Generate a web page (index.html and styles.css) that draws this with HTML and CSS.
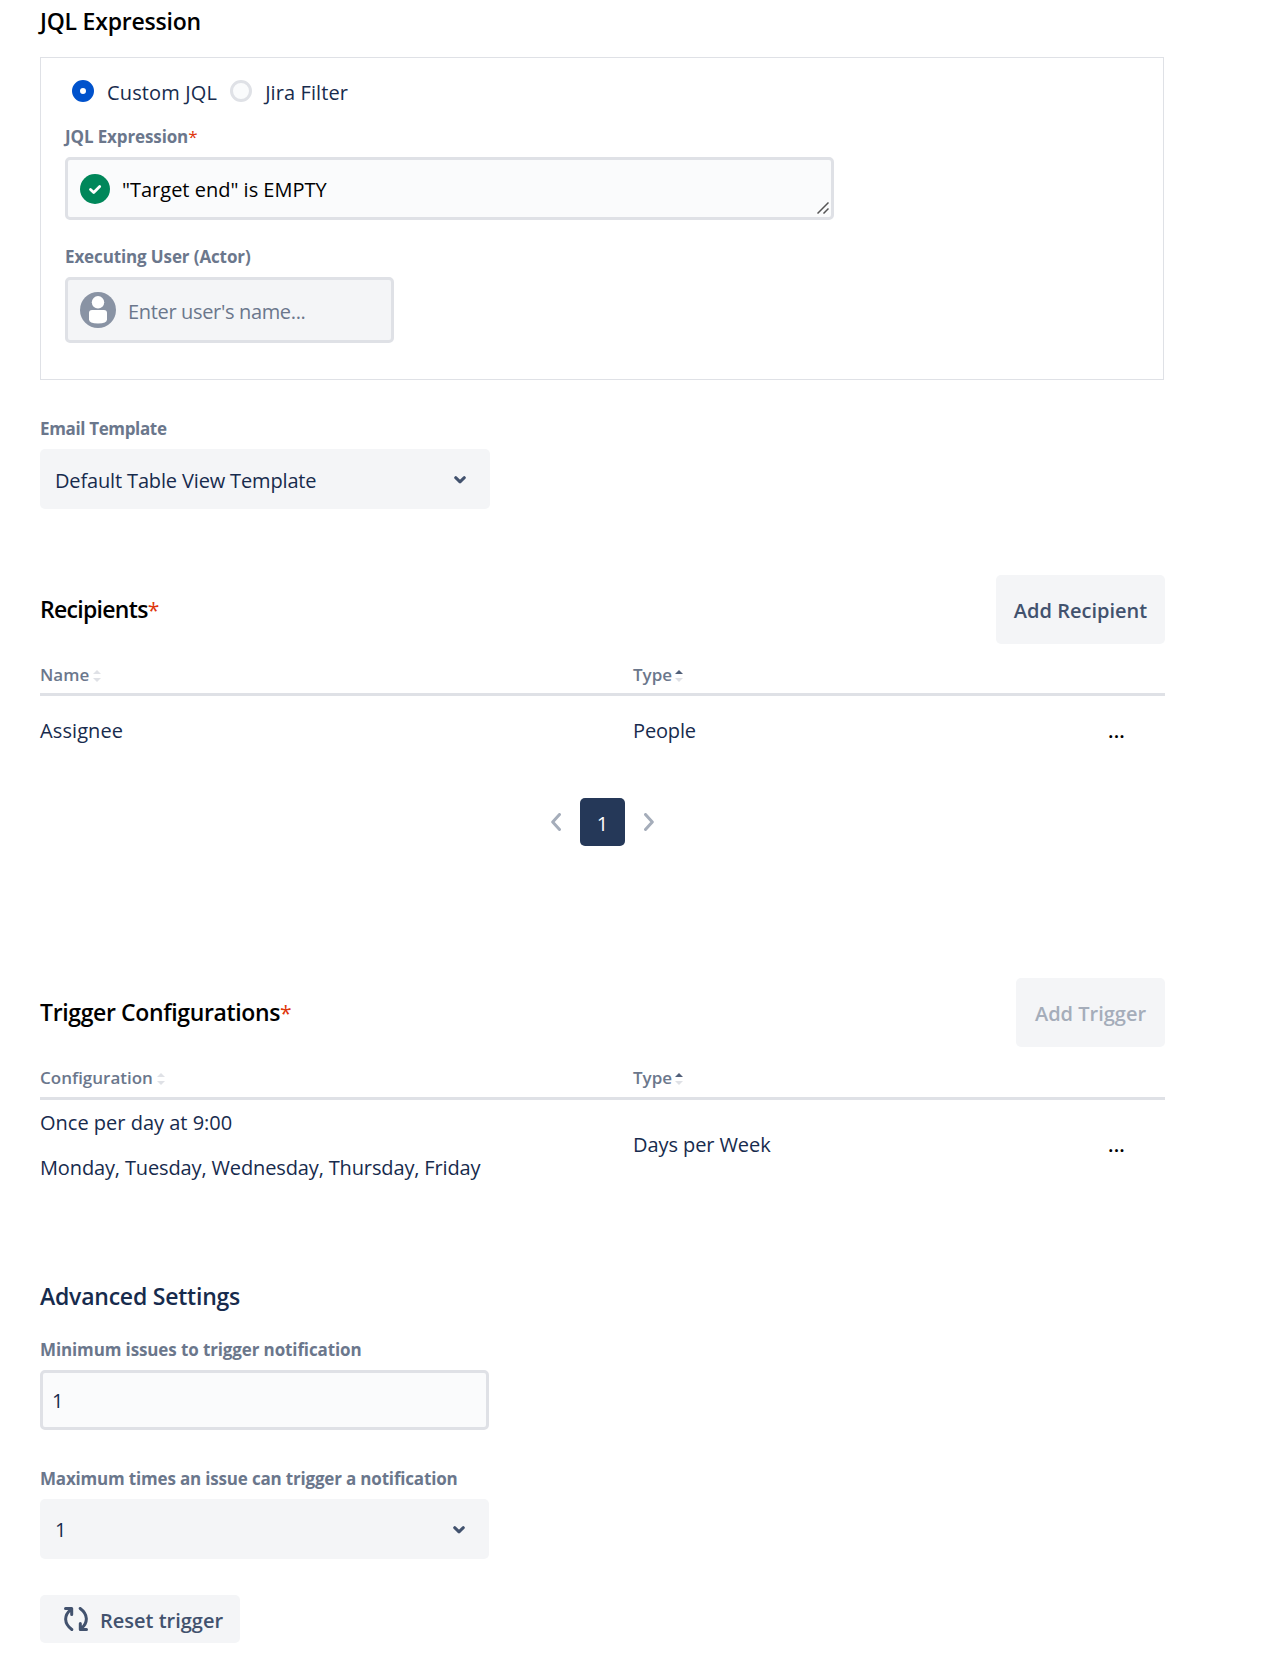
FILE: index.html
```html
<!DOCTYPE html>
<html lang="en">
<head>
    <meta charset="UTF-8">
    <meta name="viewport" content="width=device-width, initial-scale=1.0">
    <title>Notification Settings</title>
    <link rel="stylesheet" href="styles.css">
</head>

<body>
<div class="page">
    <h3 class="heading heading-jql">JQL Expression</h3>
    <div class="panel">
        <div class="radio-group">
            <label class="radio"><i class="radio-dot checked"></i><span class="radio-custom">Custom JQL</span></label>
            <label class="radio"><i class="radio-dot"></i><span class="radio-filter">Jira Filter</span></label>
        </div>

        <div class="field">
            <div class="label">JQL Expression<span class="required">*</span></div>
            <div class="box textarea">
                <svg class="icon-check" viewBox="0 0 30 30">
                    <circle cx="15" cy="15" r="15" fill="#00875a"/>
                    <path d="M10.5 15.5l3.2 3 6-6" fill="none" stroke="#fff" stroke-width="2.8" stroke-linecap="round" stroke-linejoin="round"/>
                </svg>
                <span class="jql-text">"Target end" is EMPTY</span>
                <svg class="resizer" viewBox="0 0 12 12">
                    <path d="M.5 11.5l11-11M6.5 11.5l5-5" stroke="#555" stroke-width="1.5"/>
                </svg>
            </div>
        </div>

        <div class="field">
            <div class="label">Executing User (Actor)</div>
            <div class="box user-picker">
                <svg class="icon-user" viewBox="0 0 36 36">
                    <circle cx="18" cy="18" r="18" fill="#8993a4"/>
                    <circle cx="18" cy="10.3" r="6.2" fill="#fff"/>
                    <path d="M9 21a3 3 0 0 1 3-3h12a3 3 0 0 1 3 3v6.500q0 4-9 4t-9-4z" fill="#fff"/>
                </svg>
                <span class="placeholder">Enter user's name...</span>
            </div>
        </div>
    </div>

    <div class="field field-template">
        <div class="label label-template">Email Template</div>
        <div class="select select-template">
            <span class="template-name">Default Table View Template</span>
            <svg class="chevron" viewBox="0 0 12 8"><path d="M1.700 1.700L6 5.800l4.300-4.100"/></svg>
        </div>
    </div>

    <div class="section-header recipients">
        <h3 class="heading heading-recipients">Recipients<span class="required">*</span></h3>
        <button class="btn btn-recipient">Add Recipient</button>
    </div>
    <table class="table">
        <thead>
        <tr>
            <th class="col-main">Name<svg class="sort" viewBox="0 0 8 12"><path d="M0 4l4-4 4 4z"/><path d="M0 8h8l-4 4z"/></svg></th>
            <th class="col-type">Type<svg class="sort asc" viewBox="0 0 8 12"><path d="M0 4l4-4 4 4z"/><path d="M0 8h8l-4 4z"/></svg></th>
            <th></th>
        </tr>
        </thead>
        <tbody>
        <tr>
            <td class="cell-assignee">Assignee</td>
            <td class="cell-people">People</td>
            <td class="more">...</td>
        </tr>
        </tbody>
    </table>
    <div class="pagination">
        <svg class="page-arrow" viewBox="0 0 10 18"><path d="M8.500 1.500L1.700 9l6.800 7.500"/></svg>
        <span class="page-number">1</span>
        <svg class="page-arrow" viewBox="0 0 10 18"><path d="M1.500 1.500L8.300 9l-6.800 7.500"/></svg>
    </div>

    <div class="section-header triggers">
        <h3 class="heading heading-triggers">Trigger Configurations<span class="required">*</span></h3>
        <button class="btn btn-trigger" disabled>Add Trigger</button>
    </div>
    <table class="table table-triggers">
        <thead>
        <tr>
            <th class="col-main">Configuration<svg class="sort" viewBox="0 0 8 12"><path d="M0 4l4-4 4 4z"/><path d="M0 8h8l-4 4z"/></svg></th>
            <th class="col-type">Type<svg class="sort asc" viewBox="0 0 8 12"><path d="M0 4l4-4 4 4z"/><path d="M0 8h8l-4 4z"/></svg></th>
            <th></th>
        </tr>
        </thead>
        <tbody>
        <tr>
            <td>
                <p class="schedule-time">Once per day at 9:00</p>
                <p class="schedule-days">Monday, Tuesday, Wednesday, Thursday, Friday</p>
            </td>
            <td class="cell-days">Days per Week</td>
            <td class="more">...</td>
        </tr>
        </tbody>
    </table>

    <h3 class="heading heading-advanced">Advanced Settings</h3>
    <div class="field">
        <div class="label">Minimum issues to trigger notification</div>
        <div class="box number">1</div>
    </div>
    <div class="field field-max">
        <div class="label label-max">Maximum times an issue can trigger a notification</div>
        <div class="select">
            <span>1</span>
            <svg class="chevron" viewBox="0 0 12 8"><path d="M1.700 1.700L6 5.800l4.300-4.100"/></svg>
        </div>
    </div>
    <button class="btn btn-reset">
        <svg class="icon-reset" viewBox="0 0 24 24">
            <path d="M1.500 1.500h6.200v6M6.500 2.800C0 8.300-.3 16.500 7.800 22.500"/>
            <path d="M22.500 22.500h-6.200v-6M17.500 21.200c6.500-5.500 6.800-13.700-1.300-19.700"/>
        </svg>
        <span>Reset trigger</span>
    </button>
</div>
</body>
</html>
```

FILE: styles.css
```css
* {
    padding: 0;
    margin: 0;
    box-sizing: border-box;
}

body {
    font-family: "Segoe UI", "Open Sans", "Noto Sans", sans-serif;
    font-size: 20px;
    line-height: 30px;
    color: #172b4d;
    background-color: white;
}

.page {
    width: 1165px;
    padding: 5px 0 0 40px;
}

svg {
    display: block;
    flex-shrink: 0;
}

.heading {
    font-size: 23px;
    font-weight: 600;
    line-height: 32px;
    color: black;
    letter-spacing: -0.22px;
}

.heading-jql {
    margin-bottom: 20px;
}

.heading-recipients {
    letter-spacing: -0.7px;
}

.heading-triggers {
    letter-spacing: -0.36px;
}

.heading .required {
    font-size: 21px;
}

.required {
    color: #de350b;
    font-weight: 400;
}

.panel {
    width: 1124px;
    padding: 20px 24px 36px;
    border: 1px solid #dfe1e6;
}

/* radios */

.radio-group {
    display: flex;
    margin: 0 0 17px 7px;
}

.radio {
    display: flex;
    align-items: center;
    gap: 13px;
    margin-right: 13px;
}

.radio-custom {
    letter-spacing: 0.15px;
}

.radio-filter {
    letter-spacing: 0.1px;
}

.radio-dot {
    width: 22px;
    height: 22px;
    margin-bottom: 4px;
    border: 3px solid #dfe1e6;
    border-radius: 50%;
    background-color: #fafbfc;
}

.radio-dot.checked {
    border: 8px solid #0052cc;
    background-color: white;
}

/* fields */

.field + .field {
    margin-top: 25px;
}

.label {
    margin-bottom: 8px;
    font-size: 17px;
    font-weight: 700;
    line-height: 24px;
    color: #6b778c;
    letter-spacing: -0.12px;
}

.label-template {
    letter-spacing: -0.35px;
}

.label-max {
    letter-spacing: -0.18px;
}

.box {
    position: relative;
    display: flex;
    align-items: center;
    border: 3px solid #dfe1e6;
    border-radius: 5px;
    background-color: #fafbfc;
}

.textarea {
    width: 769px;
    height: 63px;
    padding-left: 12px;
    gap: 12px;
    color: black;
}

.jql-text {
    padding-top: 2px;
}

.icon-check {
    width: 30px;
    height: 30px;
}

.resizer {
    position: absolute;
    right: 2px;
    bottom: 3px;
    width: 12px;
    height: 12px;
}

.user-picker {
    width: 329px;
    height: 66px;
    padding-left: 12px;
    gap: 12px;
    background-color: #f4f5f7;
    color: #6b778c;
}

.placeholder {
    padding-top: 3px;
    letter-spacing: -0.34px;
}

.icon-user {
    width: 36px;
    height: 36px;
}

.field-template {
    margin-top: 37px;
}

.select {
    display: flex;
    align-items: center;
    justify-content: space-between;
    width: 449px;
    height: 60px;
    padding: 2px 24px 0 15px;
    border-radius: 5px;
    background-color: #f4f5f7;
}

.select-template {
    width: 450px;
}

.template-name {
    padding-top: 1px;
    letter-spacing: -0.15px;
}

.chevron {
    width: 12px;
    height: 8px;
}

.chevron path {
    fill: none;
    stroke: #42526e;
    stroke-width: 3;
    stroke-linecap: round;
    stroke-linejoin: round;
}

/* sections */

.section-header {
    display: flex;
    align-items: center;
    justify-content: space-between;
    height: 69px;
}

.recipients {
    margin-top: 66px;
}

.triggers {
    margin-top: 132px;
}

.btn {
    height: 69px;
    padding-top: 2px;
    border: none;
    border-radius: 5px;
    background-color: #f4f5f7;
    color: #42526e;
    font: inherit;
    font-weight: 600;
}

.btn:disabled {
    color: #a5adba;
}

.btn-recipient {
    width: 169px;
}

.btn-trigger {
    width: 149px;
}

.table {
    width: 1125px;
    margin-top: 19px;
    table-layout: fixed;
    border-spacing: 0;
}

.table th {
    height: 33px;
    padding-bottom: 6px;
    border-bottom: 3px solid #dfe1e6;
    font-size: 17px;
    font-weight: 600;
    line-height: 24px;
    color: #6b778c;
    text-align: left;
}

.table-triggers th {
    height: 34px;
    padding-bottom: 7px;
}

.col-main {
    width: 593px;
}

.col-type {
    width: 475px;
}

.sort {
    display: inline-block;
    width: 8px;
    height: 12px;
    margin-left: 4px;
    vertical-align: -1px;
    fill: #dfe1e6;
}

.sort.asc {
    margin-left: 3px;
}

.sort.asc path:first-child {
    fill: #505f79;
}

.table td {
    padding: 20px 0 18px;
}

.table-triggers td {
    padding: 0;
    line-height: 45px;
}

.cell-assignee {
    letter-spacing: 0.1px;
}

.cell-people {
    letter-spacing: -0.15px;
}

.schedule-days {
    letter-spacing: -0.135px;
}

.table-triggers .cell-days,
.table-triggers .more {
    padding-bottom: 2px;
    letter-spacing: -0.08px;
}

.table .more {
    color: black;
    font-weight: 600;
    letter-spacing: 0.2px;
}

.pagination {
    display: flex;
    align-items: center;
    justify-content: center;
    gap: 19px;
    margin-top: 34px;
}

.page-arrow {
    width: 10px;
    height: 18px;
}

.page-arrow path {
    fill: none;
    stroke: #a5adba;
    stroke-width: 3;
    stroke-linecap: round;
    stroke-linejoin: round;
}

.page-number {
    width: 45px;
    height: 48px;
    border-radius: 5px;
    background-color: #253858;
    color: white;
    line-height: 52px;
    text-align: center;
}

/* advanced settings */

.heading-advanced {
    margin: 90px 0 26px;
    color: #172b4d;
}

.number {
    width: 449px;
    height: 60px;
    padding: 2px 0 0 9px;
}

.field.field-max {
    margin-top: 37px;
}

.btn-reset {
    display: flex;
    align-items: center;
    width: 200px;
    height: 48px;
    margin-top: 36px;
    padding: 0 0 0 24px;
    gap: 12px;
}

.btn-reset span {
    padding-top: 3px;
}

.icon-reset {
    width: 24px;
    height: 24px;
}

.icon-reset path {
    fill: none;
    stroke: #42526e;
    stroke-width: 3;
    stroke-linecap: round;
    stroke-linejoin: round;
}
```
